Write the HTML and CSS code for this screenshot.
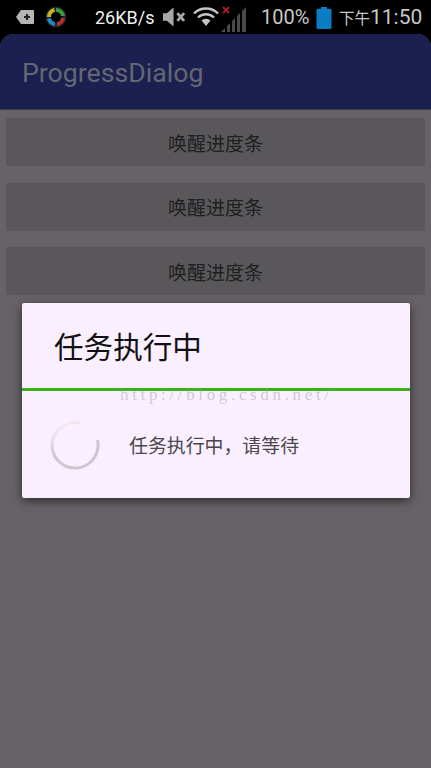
FILE: index.html
```html
<!DOCTYPE html>
<html lang="zh">
<head>
<meta charset="utf-8">
<title>ProgressDialog</title>
<link rel="stylesheet" href="styles.css">
</head>
<body>
<div class="screen">
  <header class="status">
    <svg class="ic-back" viewBox="0 0 20 16"><path d="M6 1h12a1 1 0 0 1 1 1v12a1 1 0 0 1-1 1H6L1 8z" fill="#b5b5b5"/><path d="M9 8h6M12 5v6" stroke="#222" stroke-width="2"/></svg>
    <svg class="ic-app" viewBox="0 0 22 22">
      <circle cx="11" cy="11" r="8" fill="none" stroke="#222" stroke-width="5"/>
      <path d="M2 11A9 9 0 0 1 9 2L10 6A5 5 0 0 0 6 11z" fill="#c9b322"/>
      <path d="M11 2A9 9 0 0 1 20 10L16 10A5 5 0 0 0 11 6z" fill="#3a9a3c"/>
      <path d="M20 12A9 9 0 0 1 12 20L12 16A5 5 0 0 0 16 12z" fill="#b5302a"/>
      <path d="M10 20A9 9 0 0 1 2 13L6 12A5 5 0 0 0 10 16z" fill="#1e88c7"/>
    </svg>
    <span class="speed">26KB/s</span>
    <svg class="ic-mute" viewBox="0 0 26 22"><path d="M1 7h4l7-6v20l-7-6H1z" fill="#a8a8a8"/><path d="M16 7l7 8M23 7l-7 8" stroke="#a8a8a8" stroke-width="3"/></svg>
    <svg class="ic-wifi" viewBox="0 0 26 22"><g fill="none" stroke="#c4c4c4" stroke-width="2.400"><path d="M1 7.500A17 17 0 0 1 25 7.500"/><path d="M5 11.500A11.500 11.500 0 0 1 21 11.500"/></g><path d="M8.500 14.500a6.500 6.500 0 0 1 9 0L13 20z" fill="#c4c4c4"/></svg>
    <svg class="ic-signal" viewBox="0 0 30 28">
      <path d="M3 2l6 6M9 2l-6 6" stroke="#a81c1c" stroke-width="2"/>
      <path d="M1 27l4-4v4zM7 27v-6l3-3v9zM12 27V16l3-3v14zM17 27V11l3-3v19zM22 27V6l4-4v25z" fill="#4a4a4a"/>
    </svg>
    <span class="battery-text">100%</span>
    <svg class="ic-battery" viewBox="0 0 16 26" preserveAspectRatio="none"><path d="M5 0h6v2h3a1.500 1.500 0 0 1 1.500 1.500v21A1.500 1.500 0 0 1 14 26H2A1.500 1.500 0 0 1 .5 24.500v-21A1.500 1.500 0 0 1 2 2h3z" fill="#0a7cc4"/></svg>
    <span class="clock"><span class="ampm">下午</span>11:50</span>
  </header>

  <div class="app">
    <div class="appbar">ProgressDialog</div>
    <main class="buttons">
      <button class="btn">唤醒进度条</button>
      <button class="btn">唤醒进度条</button>
      <button class="btn">唤醒进度条</button>
    </main>
  </div>

  <section class="dialog">
    <h1 class="dialog-title">任务执行中</h1>
    <div class="dialog-rule"></div>
    <div class="dialog-body">
      <svg class="spinner" viewBox="0 0 50 50">
        <defs>
          <linearGradient id="fade" x1="0" y1="0.1" x2="0.2" y2="0.8">
            <stop offset="0" stop-color="#f6f0f8"/>
            <stop offset="1" stop-color="#cbc7cd"/>
          </linearGradient>
        </defs>
        <path d="M12 44A23 23 0 0 1 2 25A23 23 0 0 1 30 3" fill="none" stroke="url(#fade)" stroke-width="3"/>
        <path d="M47.500 20A23 23 0 0 1 12 44" fill="none" stroke="#cbc7cd" stroke-width="3"/>
      </svg>
      <p class="dialog-msg">任务执行中，请等待</p>
    </div>
  </section>

  <div class="watermark">http://blog.csdn.net/</div>
</div>
</body>
</html>
```

FILE: styles.css
```css
* { box-sizing: border-box; }
html, body { margin: 0; padding: 0; }
body { width: 431px; height: 768px; overflow: hidden; background: #000; font-family: Roboto, "Noto Sans CJK SC", sans-serif; }
.screen { position: relative; width: 431px; height: 768px; display: flex; flex-direction: column; }

.status { height: 34px; flex: none; display: flex; align-items: center; padding-left: 15px; background: #000; color: #e6e6e6; }
.status svg { flex: none; display: block; }
.ic-back { width: 20px; height: 16px; }
.ic-app { width: 22px; height: 22px; margin-left: 10px; }
.speed { margin-left: 28px; width: 64px; font-size: 18px; color: #f0f0f0; }
.ic-mute { width: 25px; height: 22px; margin-left: 3px; }
.ic-wifi { width: 26px; height: 22px; margin-left: 6px; }
.ic-signal { width: 30px; height: 28px; margin-top: 3px; margin-left: 1px; }
.battery-text { margin-left: 11px; font-size: 20px; color: #c8c8c8; width: 55px; }
.ic-battery { width: 16px; height: 22px; margin-top: 1px; }
.clock { margin-left: 7px; font-size: 21px; color: #c8c8c8; white-space: nowrap; }
.ampm { font-size: 15.500px; }

.app { flex: 1; background: #666267; display: flex; flex-direction: column; border-radius: 14px 14px 0 0; overflow: hidden; }
.appbar { height: 76px; flex: none; background: #1b2050; color: #646672; font-size: 26.700px; padding: 23px 0 0 22px; line-height: 32px; border-bottom: 1px solid #3d3d4c; }
.buttons { display: flex; flex-direction: column; gap: 16.500px; padding: 8px 6px 0; }
.btn { height: 48px; border: 0; border-radius: 2px; background: #59575a; color: #1f1e20; font: 19px "Noto Sans CJK SC", sans-serif; padding: 0; }

.dialog { position: absolute; left: 22px; top: 303px; width: 388px; height: 195px; background: #f9effe; border-radius: 2px; box-shadow: 0 3px 10px rgba(0,0,0,.55); display: flex; flex-direction: column; }
.dialog-title { margin: 0; height: 85px; padding: 0 0 0 32px; font: 400 29.600px/86px "Noto Sans CJK SC", sans-serif; color: #111; }
.dialog-rule { height: 3px; flex: none; background: #3cb01c; }
.dialog-body { flex: 1; display: flex; align-items: center; padding: 0 0 0 28px; }
.spinner { width: 50px; height: 50px; flex: none; }
.dialog-msg { margin: 0 0 0 29px; font: 18.900px "Noto Sans CJK SC", sans-serif; color: #4a474c; }

.watermark { position: absolute; left: 120px; top: 385px; font: 17px "Liberation Serif", serif; letter-spacing: 3.650px; color: rgba(150,145,150,.42); white-space: nowrap; }
```
